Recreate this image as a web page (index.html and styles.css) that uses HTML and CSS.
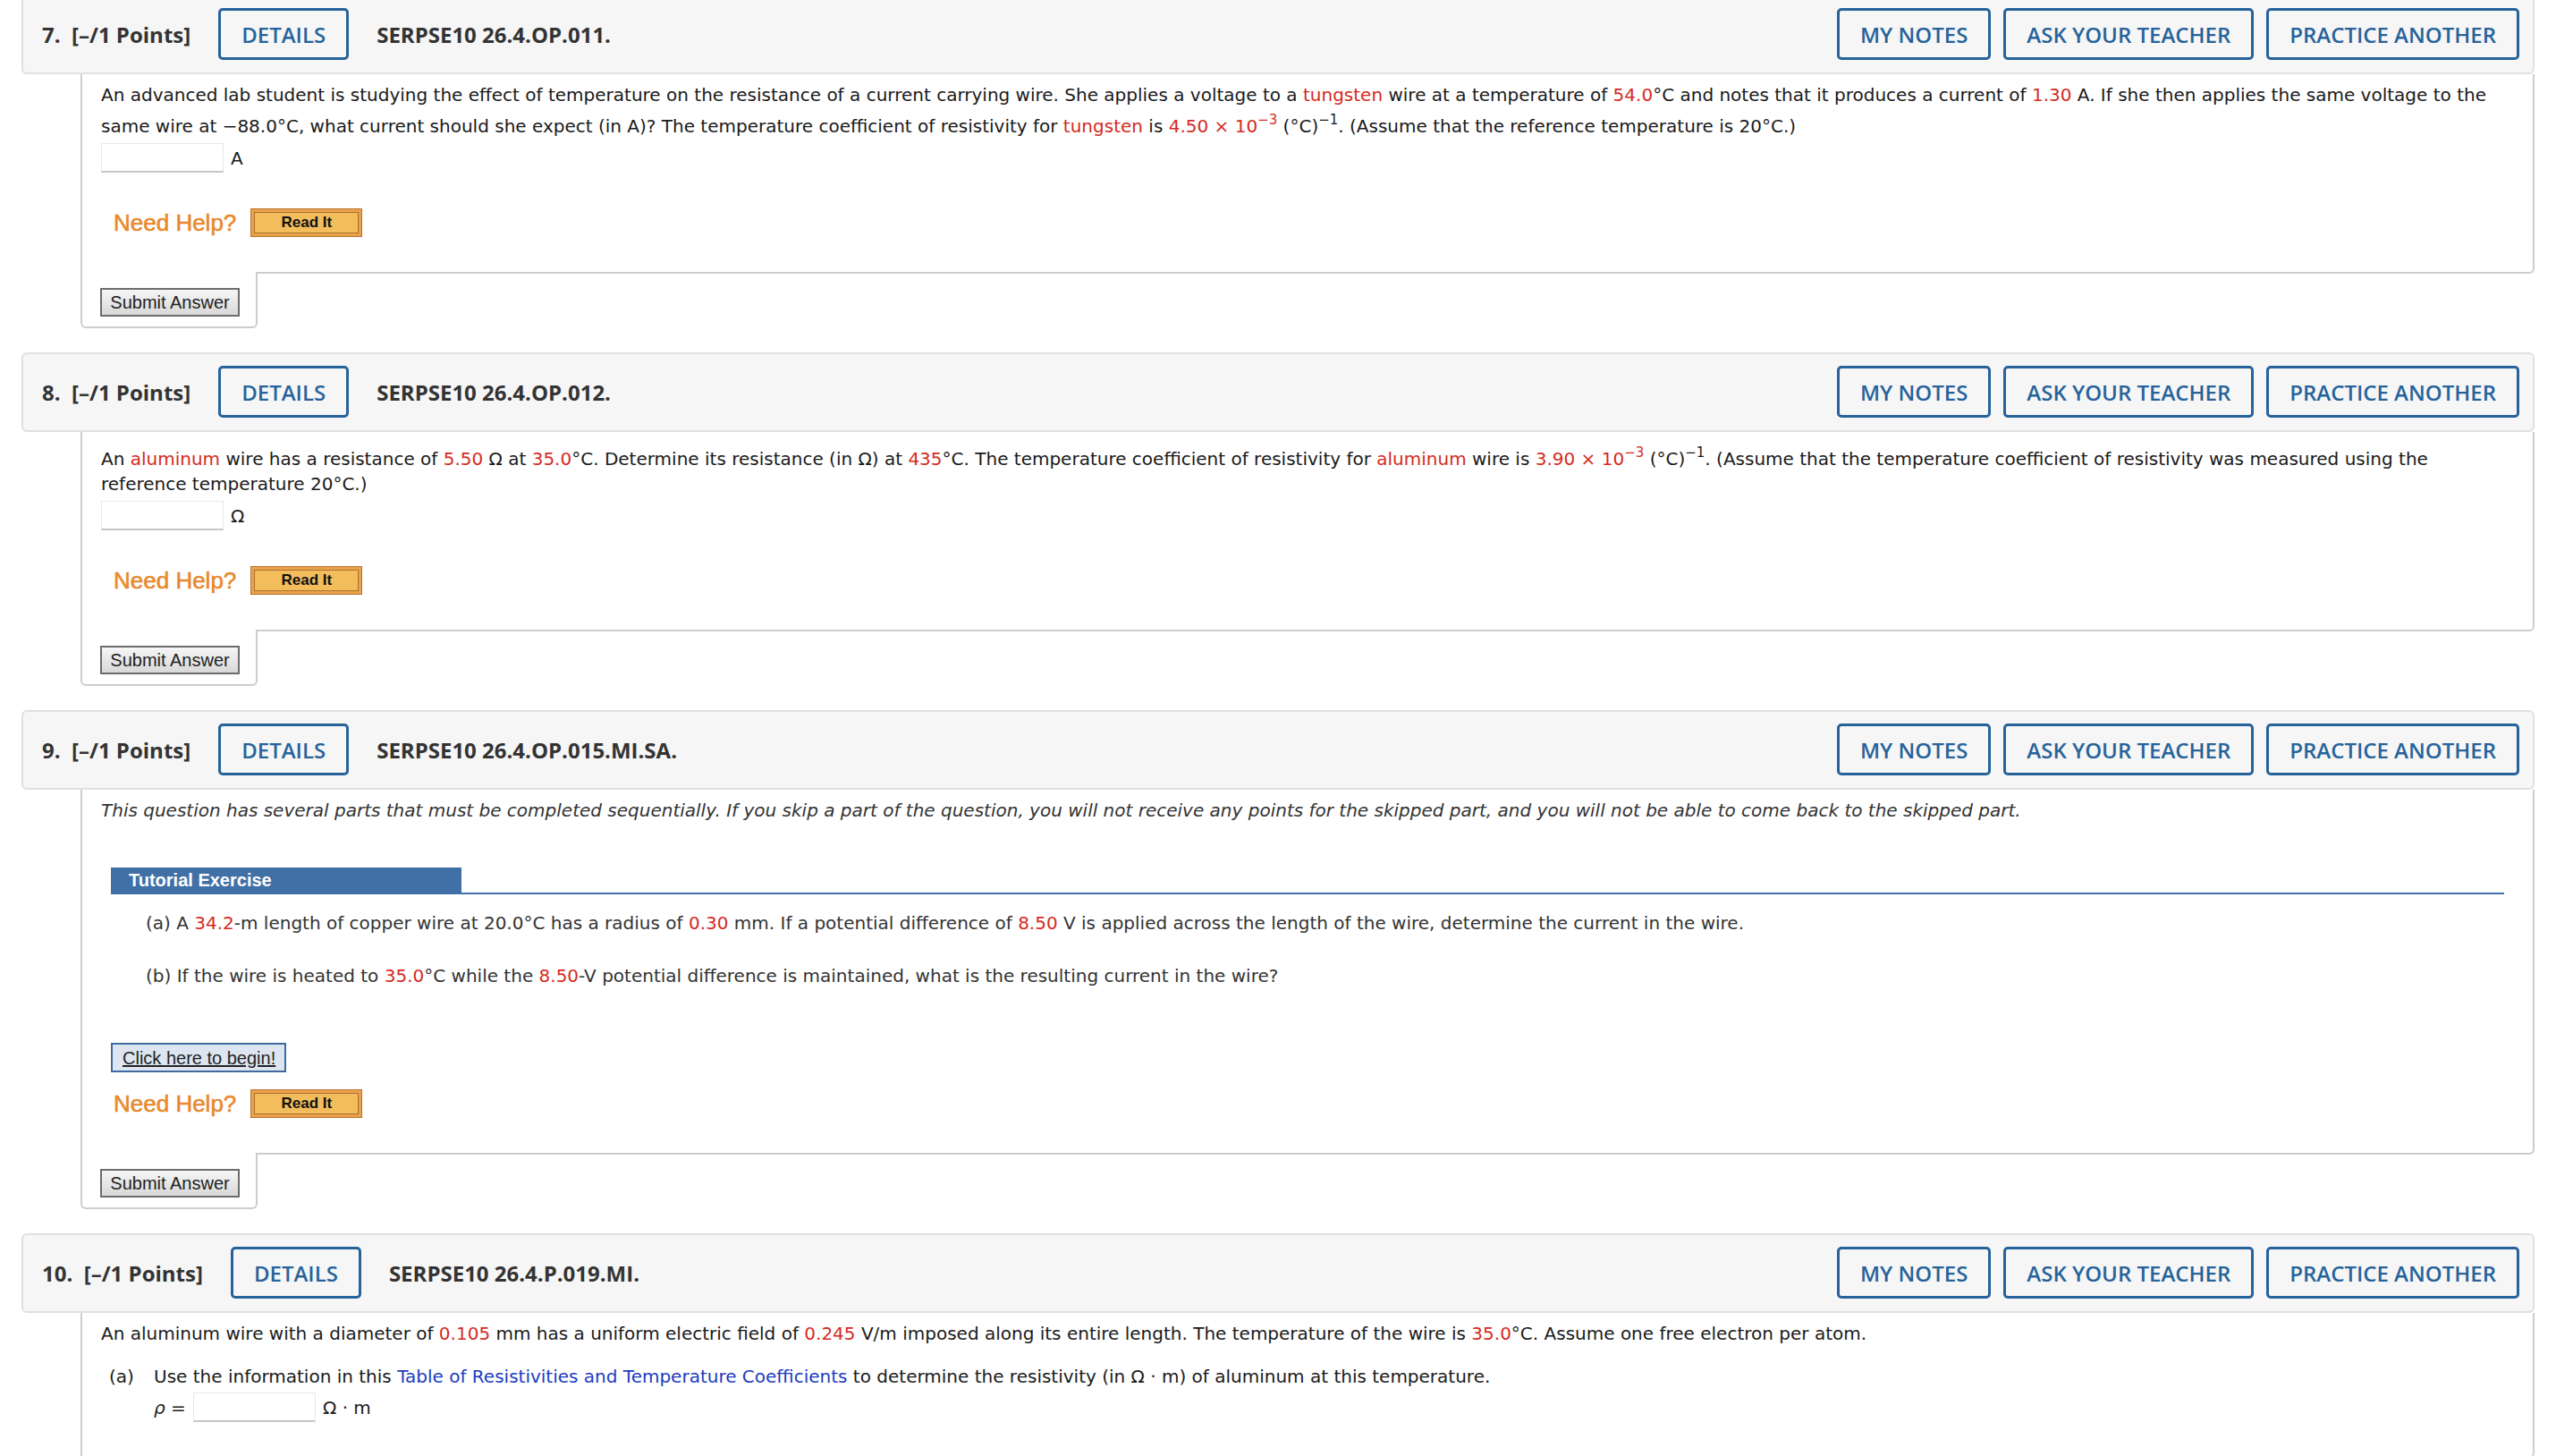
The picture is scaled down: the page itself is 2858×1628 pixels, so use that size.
FILE: index.html
```html
<!DOCTYPE html>
<html lang="en">
<head>
<meta charset="utf-8">
<title>Questions</title>
<link rel="stylesheet" href="styles.css">
</head>
<body>
<div class="page">

  <section class="question">
    <div class="qhead">
      <span class="qnum">7.  [–/1 Points]</span>
      <span class="btn details">DETAILS</span>
      <span class="qtitle">SERPSE10 26.4.OP.011.</span>
      <div class="actions">
        <span class="btn">MY NOTES</span>
        <span class="btn">ASK YOUR TEACHER</span>
        <span class="btn">PRACTICE ANOTHER</span>
      </div>
    </div>
    <div class="qbody">
      <p class="text">An advanced lab student is studying the effect of temperature on the resistance of a current carrying wire. She applies a voltage to a <span class="red">tungsten</span> wire at a temperature of <span class="red">54.0</span>°C and notes that it produces a current of <span class="red">1.30</span> A. If she then applies the same voltage to the same wire at −88.0°C, what current should she expect (in A)? The temperature coefficient of resistivity for <span class="red">tungsten</span> is <span class="red">4.50 × 10<sup>−3</sup></span> (°C)<sup>−1</sup>. (Assume that the reference temperature is 20°C.)</p>
      <div class="answer"><span class="input"></span><span class="unit">A</span></div>
      <div class="help"><span class="help-label">Need Help?</span><span class="readit"><span class="readit-in">Read It</span></span></div>
    </div>
    <div class="qfoot"><span class="submit">Submit Answer</span></div>
  </section>

  <section class="question">
    <div class="qhead">
      <span class="qnum">8.  [–/1 Points]</span>
      <span class="btn details">DETAILS</span>
      <span class="qtitle">SERPSE10 26.4.OP.012.</span>
      <div class="actions">
        <span class="btn">MY NOTES</span>
        <span class="btn">ASK YOUR TEACHER</span>
        <span class="btn">PRACTICE ANOTHER</span>
      </div>
    </div>
    <div class="qbody">
      <p class="text">An <span class="red">aluminum</span> wire has a resistance of <span class="red">5.50</span> Ω at <span class="red">35.0</span>°C. Determine its resistance (in Ω) at <span class="red">435</span>°C. The temperature coefficient of resistivity for <span class="red">aluminum</span> wire is <span class="red">3.90 × 10<sup>−3</sup></span> (°C)<sup>−1</sup>. (Assume that the temperature coefficient of resistivity was measured using the reference temperature 20°C.)</p>
      <div class="answer"><span class="input"></span><span class="unit">Ω</span></div>
      <div class="help"><span class="help-label">Need Help?</span><span class="readit"><span class="readit-in">Read It</span></span></div>
    </div>
    <div class="qfoot"><span class="submit">Submit Answer</span></div>
  </section>

  <section class="question">
    <div class="qhead">
      <span class="qnum">9.  [–/1 Points]</span>
      <span class="btn details">DETAILS</span>
      <span class="qtitle">SERPSE10 26.4.OP.015.MI.SA.</span>
      <div class="actions">
        <span class="btn">MY NOTES</span>
        <span class="btn">ASK YOUR TEACHER</span>
        <span class="btn">PRACTICE ANOTHER</span>
      </div>
    </div>
    <div class="qbody">
      <p class="text intro">This question has several parts that must be completed sequentially. If you skip a part of the question, you will not receive any points for the skipped part, and you will not be able to come back to the skipped part.</p>
      <div class="tutorial">
        <div class="tut-head"><span class="tut-title">Tutorial Exercise</span></div>
        <p class="tut-part part-a">(a) A <span class="red">34.2</span>-m length of copper wire at 20.0°C has a radius of <span class="red">0.30</span> mm. If a potential difference of <span class="red">8.50</span> V is applied across the length of the wire, determine the current in the wire.</p>
        <p class="tut-part part-b">(b) If the wire is heated to <span class="red">35.0</span>°C while the <span class="red">8.50</span>-V potential difference is maintained, what is the resulting current in the wire?</p>
      </div>
      <span class="begin">Click here to begin!</span>
      <div class="help help-tight"><span class="help-label">Need Help?</span><span class="readit"><span class="readit-in">Read It</span></span></div>
    </div>
    <div class="qfoot"><span class="submit">Submit Answer</span></div>
  </section>

  <section class="question last">
    <div class="qhead">
      <span class="qnum">10.  [–/1 Points]</span>
      <span class="btn details">DETAILS</span>
      <span class="qtitle">SERPSE10 26.4.P.019.MI.</span>
      <div class="actions">
        <span class="btn">MY NOTES</span>
        <span class="btn">ASK YOUR TEACHER</span>
        <span class="btn">PRACTICE ANOTHER</span>
      </div>
    </div>
    <div class="qbody open">
      <p class="text">An aluminum wire with a diameter of <span class="red">0.105</span> mm has a uniform electric field of <span class="red">0.245</span> V/m imposed along its entire length. The temperature of the wire is <span class="red">35.0</span>°C. Assume one free electron per atom.</p>
      <div class="part">
        <span class="part-label">(a)</span>
        <span class="part-text">Use the information in this <span class="link">Table of Resistivities and Temperature Coefficients</span> to determine the resistivity (in Ω · m) of aluminum at this temperature.</span>
      </div>
      <div class="answer rho-row"><span class="rho"><i>ρ</i> =</span><span class="input"></span><span class="unit">Ω · m</span></div>
    </div>
  </section>

</div>
</body>
</html>
```

FILE: styles.css
```css
html, body {
  margin: 0;
  padding: 0;
  background: #ffffff;
}

.page {
  margin-top: -6px;
  padding: 0 24px;
}

.question {
  margin-bottom: 27px;
}

.qhead {
  display: flex;
  align-items: center;
  background: #f6f6f6;
  border: 2px solid #e0e0e0;
  border-radius: 6px;
  padding: 13px 15px 14px 21px;
}

.qnum,
.qtitle {
  font-family: "Open Sans", "Liberation Sans", sans-serif;
  font-weight: 700;
  font-size: 24px;
  color: #333333;
  white-space: pre;
}

.btn {
  display: flex;
  align-items: center;
  box-sizing: border-box;
  height: 58px;
  padding: 0 23px;
  border: 3px solid #26639b;
  border-radius: 5px;
  color: #26639b;
  font-family: "Open Sans", "Liberation Sans", sans-serif;
  font-weight: 600;
  font-size: 24px;
  white-space: nowrap;
}

.details {
  margin: 0 31px;
}

.actions {
  margin-left: auto;
  display: flex;
  gap: 14px;
}

.qbody {
  margin-left: 66px;
  border: 2px solid #cdcdcd;
  border-top: none;
  border-radius: 0 0 6px 0;
  padding: 9px 23px 39px 21px;
  font-family: "DejaVu Sans", Verdana, sans-serif;
  font-size: 20px;
  line-height: 28px;
  color: #1a1a1a;
}

.qbody.open {
  border-bottom: none;
  padding-bottom: 40px;
}

.text {
  margin: 0;
}

.intro {
  font-style: italic;
  color: #333333;
}

.red {
  color: #d52b1e;
}

.link {
  color: #1c3cbf;
}

sup {
  font-size: 15px;
  line-height: 28px;
  vertical-align: 9px;
}

.answer {
  display: flex;
  align-items: center;
  gap: 8px;
  margin-top: 5px;
}

.input {
  display: block;
  flex: none;
  box-sizing: border-box;
  width: 137px;
  height: 33px;
  border: 1px solid #e8e8e8;
  border-bottom: 2px solid #c6c6c6;
  background: #ffffff;
}

.unit {
  white-space: nowrap;
}

.help {
  display: flex;
  align-items: center;
  gap: 16px;
  margin-top: 40px;
  padding-left: 14px;
}

.help-tight {
  margin-top: 19px;
}

.help-label {
  font-family: "Liberation Sans", Arial, sans-serif;
  font-size: 26px;
  line-height: 32px;
  color: #e8892e;
  -webkit-text-stroke: 0.6px #e8892e;
}

.readit {
  display: flex;
  box-sizing: border-box;
  width: 125px;
  height: 32px;
  padding: 3px;
  background: #eba04a;
  border: 1px solid #b8742c;
}

.readit-in {
  flex: 1;
  display: flex;
  align-items: center;
  justify-content: center;
  background: #f3bd5c;
  border: 1px solid #a8712f;
  font-family: "Liberation Sans", Arial, sans-serif;
  font-weight: 700;
  font-size: 17px;
  color: #111111;
}

.qfoot {
  position: relative;
  margin-left: 66px;
  margin-top: -2px;
  width: 198px;
  box-sizing: border-box;
  border: 2px solid #cdcdcd;
  border-top: none;
  border-radius: 0 0 6px 6px;
  background: #ffffff;
  padding: 18px 0 11px 20px;
}

.submit {
  display: flex;
  align-items: center;
  justify-content: center;
  box-sizing: border-box;
  width: 156px;
  height: 32px;
  border: 2px solid #6c6c6c;
  background: linear-gradient(#f6f6f6, #d8d8d8);
  font-family: "Liberation Sans", Arial, sans-serif;
  font-size: 20px;
  color: #222222;
}

.tutorial {
  margin: 50px 9px 0 11px;
}

.tut-head {
  display: flex;
  border-bottom: 2px solid #4170a7;
}

.tut-title {
  display: flex;
  align-items: center;
  box-sizing: border-box;
  width: 392px;
  height: 28px;
  padding-left: 20px;
  background: #4170a7;
  color: #ffffff;
  font-family: "Liberation Sans", Arial, sans-serif;
  font-weight: 700;
  font-size: 20px;
}

.tut-part {
  margin: 0;
  padding-left: 39px;
  color: #333333;
}

.part-a {
  margin-top: 18px;
}

.part-b {
  margin-top: 31px;
}

.begin {
  display: inline-flex;
  align-items: center;
  box-sizing: border-box;
  height: 33px;
  margin: 61px 0 0 11px;
  padding: 0 10px 0 11px;
  background: #dde6f0;
  border: 2px solid #3e6aa0;
  font-family: "Liberation Sans", Arial, sans-serif;
  font-size: 20px;
  color: #222222;
  text-decoration: underline;
}

.part {
  display: flex;
  margin-top: 20px;
}

.part-label {
  width: 59px;
  flex: none;
  padding-left: 9px;
  box-sizing: border-box;
}

.rho-row {
  padding-left: 59px;
  gap: 8px;
  margin-top: 4px;
}

.rho {
  white-space: nowrap;
  width: 36px;
  flex: none;
}
```
